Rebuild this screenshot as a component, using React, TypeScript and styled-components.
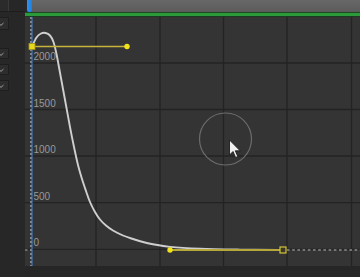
import React from "react";
import styled, { createGlobalStyle } from "styled-components";

const GlobalStyle = createGlobalStyle`
  html, body { margin: 0; padding: 0; background: #262626; overflow: hidden; }
  body { font-family: "Liberation Sans", Arial, sans-serif; }
`;

const Frame = styled.div`
  width: 360px;
  height: 277px;
  display: flex;
  background: #262626;
  overflow: hidden;
`;

const Sidebar = styled.div`
  width: 25px;
  display: flex;
  flex-direction: column;
  background: #272727;
`;

const SidebarHead = styled.div`
  height: 12px;
  display: flex;
  border-bottom: 1px solid #1d1d1d;
  box-sizing: border-box;
`;

const HeadCell = styled.div`
  width: 9px;
  border-right: 1px solid #3a3a3a;
  background: #2b2b2b;
  box-sizing: border-box;
`;

const Dropdown = styled.div<{ $gap: number; $h: number }>`
  margin-top: ${(p) => p.$gap}px;
  width: 9px;
  height: ${(p) => p.$h}px;
  box-sizing: border-box;
  background: #2d2d2d;
  border: 1px solid #1e1e1e;
  border-left: none;
  display: flex;
  align-items: center;
`;

const Chevron = () => (
  <svg width="4" height="4" viewBox="0 0 4 4">
    <polyline points="-1.5,1 1,3.4 3.5,1" fill="none" stroke="#a0a0a0" strokeWidth="1" />
  </svg>
);

const Main = styled.div`
  flex: 1;
  display: flex;
  flex-direction: column;
`;

const RulerRow = styled.div`
  height: 12px;
  display: flex;
`;

const RulerGutter = styled.div`
  width: 7px;
  padding-left: 2px;
  box-sizing: border-box;
  background: #292929;
  display: flex;
`;

const PlayheadCap = styled.div`
  width: 5px;
  height: 12px;
  background: linear-gradient(90deg, #2f92f0, #1f7fe0);
  border-radius: 0 0 1px 2px;
`;

const RulerTrack = styled.div`
  flex: 1;
  background: linear-gradient(#686868, #5b5b5b);
`;

const WorkArea = styled.div`
  height: 5px;
  box-sizing: border-box;
  border-top: 1px solid #1d4a22;
  border-bottom: 1px solid #1c3a20;
  background: #2c9a3a;
`;

const GraphBox = styled.div`
  height: 249px;
  background: #343434;
`;

const BottomStrip = styled.div`
  flex: 1;
  background: #262626;
`;

const pts: [number, number][] = [
  [32, 46.5], [36.5, 37.5], [41, 33.5], [45.5, 33], [50, 35.5], [53.5, 42],
  [56.5, 54], [59.5, 70], [63, 89], [66.5, 108], [70, 127], [74, 147],
  [78, 165], [82, 179], [86, 191], [90, 202], [95, 212], [100, 219.5],
  [106, 225.5], [113, 230.5], [123, 235.5], [133, 239], [143, 242], [153, 244.2],
  [170, 246.9], [200, 248.7], [240, 249.6], [280, 250],
];

function smoothPath(p: [number, number][]) {
  let d = `M${p[0][0]},${p[0][1]}`;
  for (let i = 0; i < p.length - 1; i++) {
    const p0 = p[i - 1] || p[i];
    const p1 = p[i];
    const p2 = p[i + 1];
    const p3 = p[i + 2] || p2;
    const c1x = p1[0] + (p2[0] - p0[0]) / 6;
    const c1y = p1[1] + (p2[1] - p0[1]) / 6;
    const c2x = p2[0] - (p3[0] - p1[0]) / 6;
    const c2y = p2[1] - (p3[1] - p1[1]) / 6;
    d += ` C${c1x.toFixed(2)},${c1y.toFixed(2)} ${c2x.toFixed(2)},${c2y.toFixed(2)} ${p2[0]},${p2[1]}`;
  }
  return d;
}

const vLines = [96, 160, 223.5, 287, 351.5];
const hLines = [63, 109.5, 156, 202.7, 249.3];
const labels = [
  { t: "2000", y: 60 },
  { t: "1500", y: 106.8 },
  { t: "1000", y: 153.3 },
  { t: "500", y: 199.8 },
  { t: "0", y: 246.4 },
];

const Graph = () => (
  <svg width="335" height="249" viewBox="25 17 335 249" style={{ display: "block" }}>
    {vLines.map((x) => (
      <line key={x} x1={x} y1={17} x2={x} y2={266} stroke="#232323" strokeWidth="1.3" />
    ))}
    {hLines.map((y) => (
      <line key={y} x1={25} y1={y} x2={360} y2={y} stroke="#232323" strokeWidth="1.3" />
    ))}
    <line x1={25} y1={250} x2={27.5} y2={250} stroke="#aaaaaa" strokeWidth="1" />
    <line x1={32} y1={17} x2={32} y2={266} stroke="#4577b5" strokeWidth="1.2" />
    <line x1={30.9} y1={17} x2={30.9} y2={266} stroke="#a9c4e4" strokeWidth="1" strokeDasharray="2 2" />
    {labels.map((l) => (
      <text key={l.t} x={33.5} y={l.y} fontSize="10" fontFamily="'Liberation Sans', Arial, sans-serif" fill="#999999">
        {l.t}
      </text>
    ))}
    <path d={smoothPath(pts)} fill="none" stroke="#cfcfcf" strokeWidth="1.9" strokeLinecap="round" />
    <line x1={34} y1={46.5} x2={127} y2={46.5} stroke="#c6b43c" strokeWidth="1.6" />
    <circle cx={127} cy={46.5} r={2.7} fill="#f2e21c" />
    <rect x={29} y={43.5} width={6} height={6} fill="#e8d81e" stroke="#a49414" strokeWidth="0.8" />
    <line x1={170} y1={250} x2={280} y2={250} stroke="#b7a83c" strokeWidth="2" />
    <circle cx={170} cy={250} r={2.7} fill="#f2e21c" />
    <line x1={287} y1={250} x2={360} y2={250} stroke="#8c8c8c" strokeWidth="1.6" strokeDasharray="2.6 2.6" />
    <rect x={280} y={247} width={6} height={6} fill="#3b3722" stroke="#d2c23c" strokeWidth="1.2" />
    <circle cx={225.5} cy={139} r={26} fill="none" stroke="#6c6c6c" strokeWidth="1.2" />
    <path
      d="M229.5,140 L229.5,155 L233,151.5 L235.6,157.5 L237.8,156.5 L235.3,150.8 L240.2,150.8 Z"
      fill="#f0f0f0"
      stroke="#1c1c1c"
      strokeWidth="0.9"
      strokeLinejoin="round"
    />
  </svg>
);

export default function App() {
  return (
    <>
      <GlobalStyle />
      <Frame>
        <Sidebar>
          <SidebarHead>
            <HeadCell />
          </SidebarHead>
          <Dropdown $gap={5} $h={13}>
            <Chevron />
          </Dropdown>
          <Dropdown $gap={18} $h={11}>
            <Chevron />
          </Dropdown>
          <Dropdown $gap={5} $h={11}>
            <Chevron />
          </Dropdown>
          <Dropdown $gap={5} $h={11}>
            <Chevron />
          </Dropdown>
        </Sidebar>
        <Main>
          <RulerRow>
            <RulerGutter>
              <PlayheadCap />
            </RulerGutter>
            <RulerTrack />
          </RulerRow>
          <WorkArea />
          <GraphBox>
            <Graph />
          </GraphBox>
          <BottomStrip />
        </Main>
      </Frame>
    </>
  );
}
